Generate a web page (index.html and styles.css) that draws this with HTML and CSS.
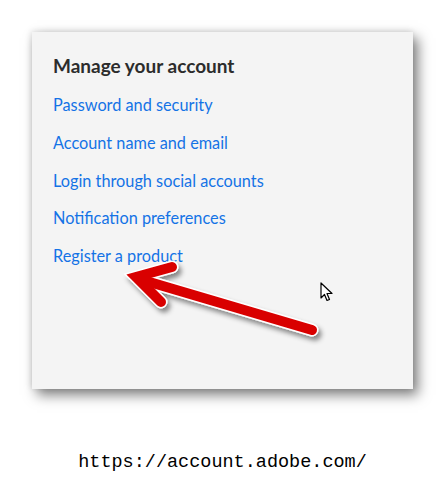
FILE: index.html
```html
<!DOCTYPE html>
<html lang="en">
<head>
  <meta charset="UTF-8">
  <title>Manage your account</title>
  <link rel="stylesheet" href="styles.css">
</head>
<body>

  <div class="shot">
    <div class="card">
      <h2>Manage your account</h2>
      <ul class="links">
        <li><a href="#">Password and security</a></li>
        <li><a href="#">Account name and email</a></li>
        <li><a href="#">Login through social accounts</a></li>
        <li><a href="#">Notification preferences</a></li>
        <li><a href="#">Register a product</a></li>
      </ul>

      <!-- red annotation arrow pointing at "Register a product" -->
      <svg class="arrow" width="381" height="357" viewBox="32 32 381 357">
        <defs>
          <filter id="drop" x="-20%" y="-20%" width="140%" height="160%">
            <feDropShadow dx="3" dy="4" stdDeviation="2.5" flood-color="#000" flood-opacity="0.45"/>
          </filter>
        </defs>
        <g filter="url(#drop)" fill="none" stroke-linecap="round" stroke-linejoin="miter" stroke-miterlimit="10">
          <g stroke="#fff" stroke-width="13">
            <path d="M172 267 L136 277 L161 302"/>
            <path d="M146 281 L312 330"/>
          </g>
          <g stroke="#d90000" stroke-width="10">
            <path d="M172 267 L136 277 L161 302"/>
            <path d="M146 281 L312 330"/>
          </g>
        </g>
      </svg>

      <!-- mouse pointer -->
      <svg class="pointer" width="14" height="22" viewBox="0 0 14 22">
        <path d="M1 1 L1 16 L4.5 12.5 L7 18.5 L9.5 17.5 L7 11.5 L12 11.5 Z" fill="#fff" stroke="#000" stroke-width="1.2" stroke-linejoin="round"/>
      </svg>
    </div>
  </div>

  <p class="url">https://account.adobe.com/</p>

</body>
</html>
```

FILE: styles.css
```css
body {
  margin: 0;
  background: #fff;
  font-family: Lato, 'Noto Sans', sans-serif;
}
.shot {
  padding: 32px 0 0 32px;
}
.card {
  position: relative;
  width: 381px;
  height: 357px;
  box-sizing: border-box;
  padding: 21px 21px 0 21px;
  background: #f4f4f4;
  box-shadow: 5px 6px 12px rgba(0,0,0,0.5), -1px -1px 6px rgba(0,0,0,0.12);
}
h2 {
  margin: 0;
  font-size: 19px;
  line-height: 26px;
  font-weight: 700;
  color: #2c2c2c;
}
.links {
  list-style: none;
  margin: 16px 0 0 0;
  padding: 0;
  display: flex;
  flex-direction: column;
  gap: 17.8px;
}
.links li {
  line-height: 20px;
}
.links a {
  font-size: 16.3px;
  color: #1473e6;
  text-decoration: none;
}
.arrow {
  position: absolute;
  left: 0;
  top: 0;
  overflow: visible;
}
.pointer {
  position: absolute;
  left: 288px;
  top: 250px;
}
.url {
  margin: 63px 0 0 0;
  text-align: center;
  font-family: 'Liberation Mono', monospace;
  font-size: 18.5px;
  color: #000;
}
```
